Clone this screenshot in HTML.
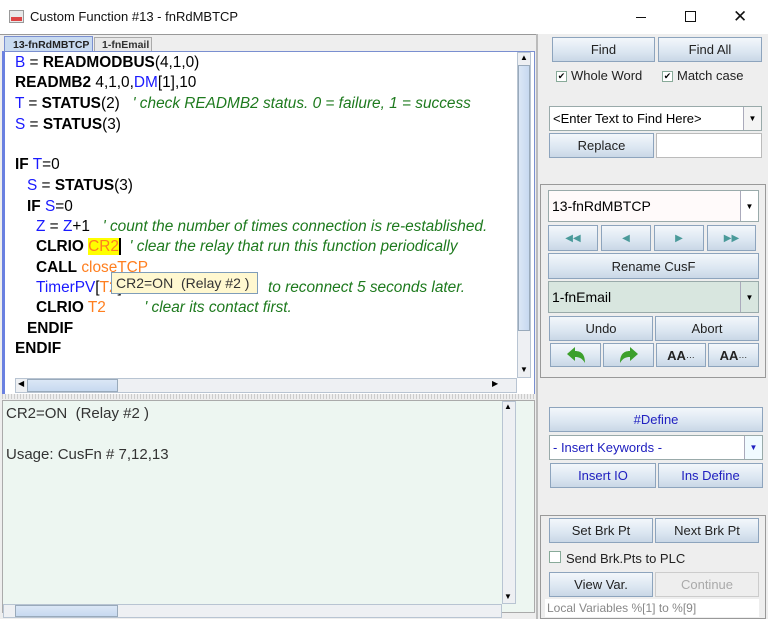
<!DOCTYPE html>
<html><head><style>
*{box-sizing:border-box;margin:0;padding:0}
body{width:768px;height:619px;overflow:hidden;background:#eeeeee;font-family:"Liberation Sans",sans-serif;position:relative}
.a{position:absolute}
.btn{position:absolute;border:1px solid #8da4bd;background:linear-gradient(#f3f7fb,#dbe6f1 60%,#c9d7e6);font-size:13px;color:#222;text-align:center;display:flex;align-items:center;justify-content:center;white-space:nowrap}
.code{position:absolute;left:0;font-size:15.4px;white-space:pre;line-height:20px}
.b{font-weight:bold;color:#000}.u{color:#1a1aff}.g{color:#1e7a1e;font-style:italic}.o{color:#ff7f1f}
.sb{position:absolute;background:#eef0f3;border:1px solid #b8c4d2}
.combo{position:absolute;border:1px solid #9aa;background:#fff;font-size:13px;display:flex;align-items:center;padding-left:3px;white-space:nowrap}
.arr{position:absolute;right:0;top:0;bottom:0;width:18px;border-left:1px solid #aab;background:#f4f4f4;display:flex;align-items:center;justify-content:center;font-size:8px}
.chk{position:absolute;width:11px;height:11px;border:1px solid #8a9;background:#fff;font-size:9px;line-height:9px;text-align:center}
</style></head><body>
<div class="a" style="left:0;top:0;width:768px;height:34px;background:#fff"></div>
<div class="a" style="left:9px;top:10px;width:15px;height:13px;border:1px solid #999;background:#e8e8e8"><div style="margin:6px 1px 0;height:4px;background:#d44"></div></div>
<div class="a" style="left:30px;top:9px;font-size:13px;color:#111">Custom Function #13 - fnRdMBTCP</div>
<div class="a" style="left:636px;top:17px;width:10px;height:1px;background:#111"></div>
<div class="a" style="left:685px;top:11px;width:11px;height:11px;border:1px solid #111"></div>
<div class="a" style="left:733px;top:7px;font-size:17px;color:#111">✕</div>
<div class="a" style="left:0;top:34px;width:536px;height:1px;background:#999"></div>
<!-- tabs -->
<div class="a" style="left:4px;top:36px;width:89px;height:16px;background:#c8daf0;border:1px solid #7a8fd0;border-bottom:none;font-size:10.5px;font-weight:bold;color:#222;padding:2px 0 0 8px;white-space:nowrap">13-fnRdMBTCP</div>
<div class="a" style="left:94px;top:37px;width:58px;height:15px;background:#e8e8e8;border:1px solid #aaa;border-bottom:none;font-size:10.5px;font-weight:bold;color:#333;padding:1px 0 0 7px;white-space:nowrap">1-fnEmail</div>
<div class="a" style="left:2px;top:51px;width:533px;height:345px;border:1px solid #7a8fd0;border-left:3px solid #6a80e0;background:#fff"></div>
<div class="a" style="left:5px;top:52px;width:512px;height:326px;background:#fff;overflow:hidden">
<div class="code" style="left:10px;top:1px"><span class="u">B</span> = <span class="b">READMODBUS</span>(4,1,0)</div>
<div class="code" style="left:10px;top:21px"><span class="b">READMB2</span> 4,1,0,<span class="u">DM</span>[1],10</div>
<div class="code" style="left:10px;top:42px"><span class="u">T</span> = <span class="b">STATUS</span>(2)   <span class="g">' check READMB2 status. 0 = failure, 1 = success</span></div>
<div class="code" style="left:10px;top:63px"><span class="u">S</span> = <span class="b">STATUS</span>(3)</div>
<div class="code" style="left:10px;top:103px"><span class="b">IF</span> <span class="u">T</span>=0</div>
<div class="code" style="left:22px;top:124px"><span class="u">S</span> = <span class="b">STATUS</span>(3)</div>
<div class="code" style="left:22px;top:145px"><span class="b">IF</span> <span class="u">S</span>=0</div>
<div class="code" style="left:31px;top:165px"><span class="u">Z</span> = <span class="u">Z</span>+1   <span class="g">' count the number of times connection is re-established.</span></div>
<div class="code" style="left:31px;top:185px"><span class="b">CLRIO</span> <span class="o" style="background:#ffff00">CR2</span><span style="border-left:2px solid #000"></span>  <span class="g">' clear the relay that run this function periodically</span></div>
<div class="code" style="left:31px;top:206px"><span class="b">CALL</span> <span class="o">closeTCP</span></div>
<div class="code" style="left:31px;top:226px"><span class="u">TimerPV</span>[<span class="o">T2</span>]</div>
<div class="code" style="left:263px;top:226px"><span class="g">to reconnect 5 seconds later.</span></div>
<div class="code" style="left:31px;top:246px"><span class="b">CLRIO</span> <span class="o">T2</span>         <span class="g">' clear its contact first.</span></div>
<div class="code" style="left:22px;top:267px"><span class="b">ENDIF</span></div>
<div class="code" style="left:10px;top:287px"><span class="b">ENDIF</span></div>
</div>
<div class="a" style="left:111px;top:272px;width:147px;height:22px;background:#fff8d0;border:1px solid #7f9db9;font-size:14px;color:#333;padding:2px 0 0 4px;white-space:pre">CR2=ON  (Relay #2 )</div>
<!-- vscroll -->
<div class="sb" style="left:517px;top:52px;width:14px;height:326px"></div>
<div class="a" style="left:518px;top:65px;width:12px;height:266px;background:linear-gradient(90deg,#dbe7f6,#c7d9f0);border:1px solid #9ab"></div>
<div class="a" style="left:520px;top:53px;font-size:8px">▲</div><div class="a" style="left:520px;top:365px;font-size:8px">▼</div>
<div class="sb" style="left:15px;top:378px;width:502px;height:15px"></div>
<div class="a" style="left:27px;top:379px;width:91px;height:13px;background:linear-gradient(#dbe7f6,#c7d9f0);border:1px solid #9ab"></div>
<div class="a" style="left:18px;top:379px;font-size:8px">◀</div><div class="a" style="left:492px;top:379px;font-size:8px">▶</div>
<div class="a" style="left:2px;top:394px;width:533px;height:5px;background:repeating-linear-gradient(90deg,#ccc 0 1px,#eee 1px 3px)"></div>
<!-- bottom panel -->
<div class="a" style="left:2px;top:400px;width:533px;height:213px;border:1px solid #aaa;background:#edf6f1"></div>
<div class="a" style="left:6px;top:405px;font-size:15px;color:#333;white-space:pre">CR2=ON  (Relay #2 )</div>
<div class="a" style="left:6px;top:446px;font-size:15px;color:#333">Usage: CusFn # 7,12,13</div>
<div class="sb" style="left:502px;top:401px;width:14px;height:203px"></div>
<div class="a" style="left:504px;top:402px;font-size:8px">▲</div><div class="a" style="left:504px;top:592px;font-size:8px">▼</div>
<div class="sb" style="left:3px;top:604px;width:499px;height:14px"></div>
<div class="a" style="left:15px;top:605px;width:103px;height:12px;background:linear-gradient(#dbe7f6,#c7d9f0);border:1px solid #9ab"></div>
<!-- right panel -->
<div class="a" style="left:536px;top:34px;width:2px;height:585px;background:#bbb"></div>
<div class="btn" style="left:552px;top:37px;width:103px;height:25px">Find</div>
<div class="btn" style="left:658px;top:37px;width:104px;height:25px">Find All</div>
<div class="chk" style="left:556px;top:71px">✔</div><div class="a" style="left:571px;top:68px;font-size:13px;color:#222">Whole Word</div>
<div class="chk" style="left:662px;top:71px">✔</div><div class="a" style="left:677px;top:68px;font-size:13px;color:#222">Match case</div>
<div class="combo" style="left:549px;top:106px;width:213px;height:25px">&lt;Enter Text to Find Here&gt;<div class="arr">▼</div></div>
<div class="btn" style="left:549px;top:133px;width:105px;height:25px">Replace</div>
<div class="a" style="left:656px;top:133px;width:106px;height:25px;background:#fff;border:1px solid #bbb"></div>
<div class="a" style="left:540px;top:184px;width:226px;height:194px;border:1px solid #999"></div>
<div class="combo" style="left:548px;top:190px;width:211px;height:32px;background:#fffafa;font-size:14px">13-fnRdMBTCP<div class="arr" style="background:#fff">▼</div></div>
<div class="btn" style="left:548px;top:225px;width:50px;height:26px;color:#4a9a9a;font-size:10px">◀◀</div>
<div class="btn" style="left:601px;top:225px;width:50px;height:26px;color:#4a9a9a;font-size:10px">◀</div>
<div class="btn" style="left:654px;top:225px;width:50px;height:26px;color:#4a9a9a;font-size:10px">▶</div>
<div class="btn" style="left:707px;top:225px;width:49px;height:26px;color:#4a9a9a;font-size:10px">▶▶</div>
<div class="btn" style="left:548px;top:253px;width:211px;height:26px">Rename CusF</div>
<div class="combo" style="left:548px;top:281px;width:211px;height:32px;background:#d8e6df;font-size:14px">1-fnEmail<div class="arr" style="background:#d8e6df">▼</div></div>
<div class="btn" style="left:549px;top:316px;width:104px;height:25px">Undo</div>
<div class="btn" style="left:655px;top:316px;width:104px;height:25px">Abort</div>
<div class="btn" style="left:550px;top:343px;width:51px;height:24px"><svg width="22" height="20"><path d="M2 9 L10 2 V6 C17 6 20 10 20 18 C17 13 14 12 10 12 V16 Z" fill="#3ca02c"/></svg></div>
<div class="btn" style="left:603px;top:343px;width:51px;height:24px"><svg width="22" height="20"><path d="M20 9 L12 2 V6 C5 6 2 10 2 18 C5 13 8 12 12 12 V16 Z" fill="#3ca02c"/></svg></div>
<div class="btn" style="left:656px;top:343px;width:50px;height:24px;font-size:13px;font-weight:bold">AA <span style="font-size:9px;font-weight:normal">…</span></div>
<div class="btn" style="left:708px;top:343px;width:51px;height:24px;font-size:13px;font-weight:bold">AA <span style="font-size:9px;font-weight:normal">…</span></div>
<div class="btn" style="left:549px;top:407px;width:214px;height:25px;color:#2020c0">#Define</div>
<div class="combo" style="left:549px;top:435px;width:214px;height:25px;color:#2020c0">- Insert Keywords -<div class="arr" style="background:#f0fbff">▼</div></div>
<div class="btn" style="left:550px;top:463px;width:106px;height:25px;color:#2020c0">Insert IO</div>
<div class="btn" style="left:658px;top:463px;width:105px;height:25px;color:#2020c0">Ins Define</div>
<div class="a" style="left:540px;top:515px;width:226px;height:104px;border:1px solid #999"></div>
<div class="btn" style="left:549px;top:518px;width:104px;height:25px">Set Brk Pt</div>
<div class="btn" style="left:655px;top:518px;width:104px;height:25px">Next Brk Pt</div>
<div class="chk" style="left:549px;top:551px;width:12px;height:12px"></div><div class="a" style="left:566px;top:551px;font-size:13px;color:#222">Send Brk.Pts to PLC</div>
<div class="btn" style="left:549px;top:572px;width:104px;height:25px">View Var.</div>
<div class="a" style="left:655px;top:572px;width:104px;height:25px;border:1px solid #ccc;background:#eee;font-size:13px;color:#aaa;text-align:center;line-height:23px">Continue</div>
<div class="a" style="left:545px;top:599px;width:214px;height:18px;background:#fff;font-size:12px;color:#888;padding:2px 0 0 2px">Local Variables %[1] to %[9]</div>
</body></html>
